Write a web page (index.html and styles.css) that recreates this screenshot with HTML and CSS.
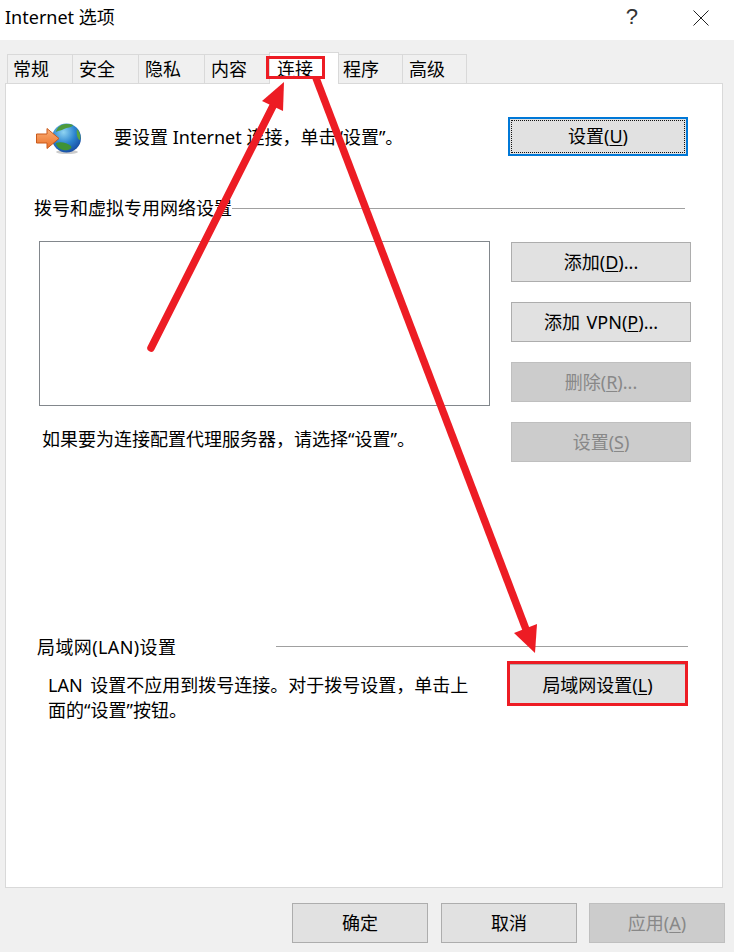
FILE: index.html
```html
<!DOCTYPE html>
<html lang="zh-CN">
<head>
    <meta charset="UTF-8">
    <title>Internet 选项</title>
    <link rel="stylesheet" href="styles.css">
</head>
<body>
    <div class="dialog">
        <div class="titlebar">
            <span class="title">Internet 选项</span>
            <span class="help">?</span>
            <svg class="close" width="16" height="16" viewBox="0 0 16 16">
                <path d="M0.5 0.5L15.5 15.5M15.5 0.5L0.5 15.5" stroke="#222" stroke-width="1" fill="none"/>
            </svg>
        </div>

        <div class="body">
            <div class="tabs">
                <div class="tab">常规</div>
                <div class="tab">安全</div>
                <div class="tab">隐私</div>
                <div class="tab">内容</div>
                <div class="tab active">连接</div>
                <div class="tab narrow">程序</div>
                <div class="tab narrow">高级</div>
            </div>

            <div class="panel">
                <div class="setup-row">
                    <svg class="globe" width="46" height="32" viewBox="0 0 46 32">
                        <defs>
                            <radialGradient id="sea" cx="0.4" cy="0.3" r="0.8">
                                <stop offset="0" stop-color="#8fd4f2"/>
                                <stop offset="0.5" stop-color="#2c84cf"/>
                                <stop offset="1" stop-color="#123f9a"/>
                            </radialGradient>
                            <linearGradient id="arrowFill" x1="0" y1="0" x2="0" y2="1">
                                <stop offset="0" stop-color="#fbb078"/>
                                <stop offset="1" stop-color="#ea6f26"/>
                            </linearGradient>
                        </defs>
                        <ellipse cx="31" cy="29" rx="11" ry="2" fill="#ccc"/>
                        <circle cx="30.5" cy="15" r="14.5" fill="url(#sea)"/>
                        <path d="M24 3C27 0.5 33 0.5 37 2C36 5 31 4 28 6C25 8 23 7 20 9C20 7 22 4 24 3Z" fill="#4d9a3c"/>
                        <path d="M41 6C44 9 45 13 44 17C42 17 40 12 41 6Z" fill="#5aa53f"/>
                        <path d="M20 20C25 18 31 20 35 23C37 26 31 28 27 27C23 26 20 23 20 20Z" fill="#3f9236"/>
                        <path d="M0.5 11H11V5.5L23 15.5L11 25.5V20H0.5Z" fill="url(#arrowFill)" stroke="#c9591a" stroke-width="1"/>
                    </svg>
                    <span class="setup-text">要设置 Internet 连接，单击“设置”。</span>
                    <button class="btn focused"><span>设置(<u>U</u>)</span></button>
                </div>

                <div class="group-head dial-head">
                    <span>拨号和虚拟专用网络设置</span>
                    <i class="rule"></i>
                </div>

                <div class="dial-row">
                    <div class="dial-left">
                        <div class="listbox"></div>
                        <p class="proxy-text">如果要为连接配置代理服务器，请选择“设置”。</p>
                    </div>
                    <div class="dial-buttons">
                        <button class="btn">添加(<u>D</u>)...</button>
                        <button class="btn vpn">添加 VPN(<u>P</u>)...</button>
                        <button class="btn disabled">删除(<u>R</u>)...</button>
                        <button class="btn disabled">设置(<u>S</u>)</button>
                    </div>
                </div>

                <div class="group-head lan-head">
                    <span>局域网(LAN)设置</span>
                    <i class="rule"></i>
                </div>

                <div class="lan-row">
                    <p class="lan-text">LAN 设置不应用到拨号连接。对于拨号设置，单击上面的“设置”按钮。</p>
                    <button class="btn lan-btn">局域网设置(<u>L</u>)</button>
                </div>
            </div>

            <div class="footer">
                <button class="btn">确定</button>
                <button class="btn">取消</button>
                <button class="btn disabled">应用(<u>A</u>)</button>
            </div>
        </div>

        <!-- red annotations drawn on top of the screenshot -->
        <div class="mark mark-tab"></div>
        <div class="mark mark-lan"></div>
        <svg class="arrows" width="734" height="952" viewBox="0 0 734 952">
            <path d="M151 348L275 102" stroke="#ed1c24" stroke-width="7.5" stroke-linecap="round" fill="none"/>
            <path d="M284 82L283 111L262 101Z" fill="#ed1c24"/>
            <path d="M316 78L527 632" stroke="#ed1c24" stroke-width="7.5" fill="none"/>
            <path d="M535 653L514 633L537 624Z" fill="#ed1c24"/>
        </svg>
    </div>
</body>
</html>
```

FILE: styles.css
```css
* {
    box-sizing: border-box;
}

body {
    margin: 0;
    font-family: "Noto Sans", "Noto Sans CJK SC", sans-serif;
    font-size: 18px;
    color: #000;
    background-color: #f0f0f0;
}

.dialog {
    position: relative;
    width: 734px;
    height: 952px;
    overflow: hidden;
}

.titlebar {
    display: flex;
    align-items: center;
    height: 40px;
    padding: 0 25px 6px 5px;
    background-color: white;
}

.title {
    flex: 1;
    margin-bottom: 2px;
}

.help {
    margin-right: 55px;
    font-family: "Liberation Sans", sans-serif;
    font-size: 22px;
    color: #333;
}

.close {
    margin-top: 1px;
}

.body {
    display: flex;
    flex-direction: column;
    height: 912px;
}

.tabs {
    display: flex;
    align-items: flex-end;
    height: 44px;
    padding-left: 7px;
}

.tab {
    width: 67px;
    height: 30px;
    margin-right: -1px;
    padding-left: 6px;
    line-height: 29px;
    border: 1px solid #d9d9d9;
    border-bottom: none;
    background-color: #f0f0f0;
}

.tab:first-child {
    width: 66px;
    padding-left: 5px;
}

.tab.narrow {
    width: 65px;
    padding-left: 4px;
}

.tab.narrow:last-child {
    padding-left: 6px;
}

.tab.active {
    position: relative;
    width: 70px;
    height: 32px;
    margin-left: -1px;
    padding-left: 7px;
    line-height: 33px;
    background-color: white;
}

.panel {
    display: flex;
    flex-direction: column;
    width: 718px;
    height: 805px;
    margin: -1px 0 0 5px;
    padding: 33px 34px 0 28px;
    background-color: white;
    border: 1px solid #d9d9d9;
}

.setup-row {
    display: flex;
    align-items: center;
    height: 39px;
}

.globe {
    flex: none;
    margin: 4px 32px 0 2px;
}

.setup-text {
    flex: 1;
    margin-bottom: 2px;
}

.btn {
    width: 180px;
    height: 40px;
    padding: 0 0 2px;
    font: inherit;
    color: #000;
    background-color: #e1e1e1;
    border: 1px solid #adadad;
}

.btn u {
    text-underline-offset: 2px;
}

.btn.vpn {
    word-spacing: 2px;
}

.btn.disabled {
    color: #888;
    background-color: #ccc;
    border-color: #bfbfbf;
}

.btn.focused {
    flex: none;
    width: 180px;
    height: 39px;
    padding: 1px;
    border: 2px solid #0078d7;
}

.btn.focused span {
    display: block;
    height: 100%;
    line-height: 31px;
    border: 1px dotted #111;
}

.group-head {
    display: flex;
    align-items: center;
    height: 26px;
}

.group-head span {
    flex: none;
}

.rule {
    flex: 1;
    height: 1px;
    background-color: #a0a0a0;
}

.dial-head {
    margin-top: 39px;
    margin-right: 3px;
}

.dial-head span {
    margin-bottom: 2px;
}

.dial-row {
    display: flex;
    justify-content: space-between;
    margin-top: 20px;
    margin-right: -3px;
}

.dial-left {
    width: 451px;
    margin-left: 5px;
}

.listbox {
    height: 165px;
    border: 1px solid #82878c;
}

.proxy-text {
    margin: 20px 0 0 3px;
    line-height: 26px;
}

.dial-buttons {
    display: flex;
    flex-direction: column;
    gap: 20px;
    margin-top: 1px;
}

.lan-head {
    margin-top: 171px;
    margin-left: 3px;
}

.lan-head span {
    width: 239px;
    letter-spacing: 0.4px;
}

.lan-row {
    display: flex;
    justify-content: space-between;
    margin-top: 5px;
    margin-left: 14px;
}

.lan-text {
    width: 430px;
    margin: 9px 0 0;
    line-height: 25px;
    word-spacing: 3px;
}

.lan-btn {
    width: 177px;
    margin-right: 2px;
    padding-bottom: 0;
}

.footer {
    display: flex;
    justify-content: flex-end;
    gap: 13px;
    padding: 15px 9px 0 0;
}

.footer .btn {
    width: 136px;
}

.footer .btn.disabled {
    margin-left: -1px;
}

.mark {
    position: absolute;
    border: 3px solid #ed1c24;
}

.mark-tab {
    left: 266px;
    top: 56px;
    width: 59px;
    height: 23px;
}

.mark-lan {
    left: 507px;
    top: 661px;
    width: 181px;
    height: 45px;
}

.arrows {
    position: absolute;
    left: 0;
    top: 0;
}
```
